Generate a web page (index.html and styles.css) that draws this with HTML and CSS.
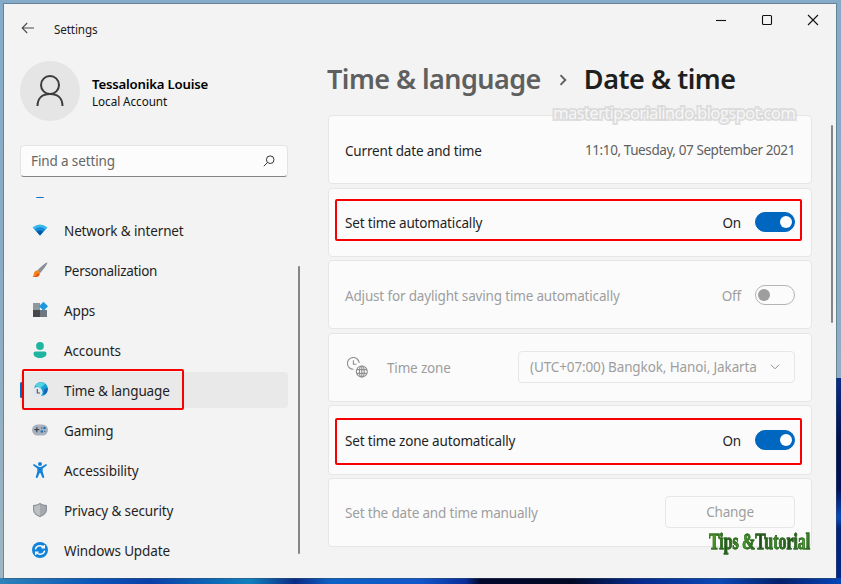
FILE: index.html
```
<!DOCTYPE html>
<html lang="en">
<head>
    <meta charset="utf-8">
    <title>Settings</title>
    <link rel="stylesheet" href="styles.css">
</head>
<body>
<div class="window">
    <header class="titlebar">
        <svg class="back" width="14" height="12" viewBox="0 0 14 12"><path d="M13 6H1.2M6.2 1 1.2 6l5 5"/></svg>
        <span class="app-name">Settings</span>
        <div class="controls">
            <svg width="12" height="12" viewBox="0 0 12 12"><path d="M1 6.5h10"/></svg>
            <svg width="12" height="12" viewBox="0 0 12 12"><rect x="1.5" y="1.5" width="9" height="9" rx="1"/></svg>
            <svg width="12" height="12" viewBox="0 0 12 12"><path d="m1 1 10 10M11 1 1 11"/></svg>
        </div>
    </header>

    <div class="content">
        <aside class="sidebar">
            <div class="profile">
                <div class="avatar">
                    <svg width="30" height="34" viewBox="0 0 30 34"><circle cx="15" cy="11" r="9"/><path d="M2.500 32c0-8 5-12 12.500-12s12.500 4 12.500 12"/></svg>
                </div>
                <div>
                    <div class="user">Tessalonika Louise</div>
                    <div class="account">Local Account</div>
                </div>
            </div>

            <div class="search">
                <span>Find a setting</span>
                <svg width="12" height="12" viewBox="0 0 12 12"><circle cx="7.200" cy="4.700" r="3.800"/><path d="M4.500 7.500.8 11.200"/></svg>
            </div>

            <nav class="nav">
                <a class="item first">
                    <svg width="16" height="16" viewBox="0 0 16 16"><rect x="4" y="13" width="8" height="3" rx="1" fill="#1a6dc0"/></svg>
                </a>
                <a class="item">
                    <svg width="16" height="16" viewBox="0 0 16 16">
                        <path d="M.5 5.500Q8-.5 15.500 5.500L8 13.500z" fill="#39b8ea"/>
                        <path d="M2.600 7.400Q8 3 13.400 7.400L8 13.500z" fill="#1489dc"/>
                        <path d="M4.800 9.700Q8 7.200 11.200 9.700L8 13.500z" fill="#0a57a0"/>
                    </svg>
                    <span>Network &amp; internet</span>
                </a>
                <a class="item">
                    <svg width="16" height="16" viewBox="0 0 16 16">
                        <path d="M15.300.5C16 1.200 11.500 7.500 8.200 11L5.400 8.400C9 4.500 14.500-.3 15.300.5z" fill="#8b9096"/>
                        <path d="M5.200 8.600c1.800 0 3 1.300 2.800 2.900C7.600 14.400 4 15.600.5 14.800 2 13.600 1.400 12 2.300 10.300 3 9.200 4 8.600 5.200 8.600z" fill="#f58220"/>
                        <path d="M4.800 11c.8 2-1 3.600-3.800 3.800 3 .6 6-.4 6.700-2.400z" fill="#e4501c"/>
                    </svg>
                    <span class="narrow">Personalization</span>
                </a>
                <a class="item">
                    <svg width="16" height="16" viewBox="0 0 16 16">
                        <path d="M1 1h7v7H1z" fill="#8e979e"/>
                        <path d="M1 8h7v7H1z" fill="#45494d"/>
                        <path d="M8 8h7v7H8z" fill="#70777f"/>
                        <path d="m11.500.2 4 4-4 4-4-4z" fill="#1d98de" stroke="#1d98de" stroke-linejoin="round"/>
                    </svg>
                    <span>Apps</span>
                </a>
                <a class="item">
                    <svg width="16" height="16" viewBox="0 0 16 16">
                        <circle cx="8" cy="4" r="3.900" fill="#20b5a0"/>
                        <path d="M3.500 9.500h9a2 2 0 0 1 2 2c0 2.800-2.700 4.500-6.500 4.500s-6.500-1.700-6.500-4.500a2 2 0 0 1 2-2z" fill="#20b5a0"/>
                    </svg>
                    <span>Accounts</span>
                </a>
                <a class="item active">
                    <svg width="16" height="16" viewBox="0 0 16 16">
                        <circle cx="9" cy="7" r="6.900" fill="#17a3d4"/>
                        <path d="M3 4C5 0 10-.8 13 1.500c-1 2.500-3 2-4 4.500z" fill="#55d3dc"/>
                        <path d="M12 7.500l3.500-2c.8 3-1 6.500-4 7.800z" fill="#1267b6"/>
                        <circle cx="5.300" cy="10.200" r="5.200" fill="#e4e8ed"/>
                        <path d="M5.300 7v4h2.800" fill="none" stroke="#555b64" stroke-width="1.200"/>
                    </svg>
                    <span>Time &amp; language</span>
                    <i class="mark mark-nav"></i>
                </a>
                <a class="item">
                    <svg width="16" height="16" viewBox="0 0 16 16">
                        <rect y="2.500" width="16" height="11" rx="5.500" fill="#a9b2bc"/>
                        <path d="M4.800 5.200v5M2.300 7.700h5" stroke="#3f4852" stroke-width="1.200"/>
                        <circle cx="12.500" cy="6" r="1.200" fill="#1771bd"/><circle cx="9.800" cy="9.500" r="1.200" fill="#1771bd"/><circle cx="12.700" cy="9.500" r=".8" fill="#44719b"/><circle cx="9.800" cy="6" r=".8" fill="#44719b"/>
                    </svg>
                    <span>Gaming</span>
                </a>
                <a class="item">
                    <svg width="16" height="16" viewBox="0 0 16 16">
                        <circle cx="8" cy="2" r="2" fill="#1582d8"/>
                        <path d="M2.400 2.200 7 5h2l4.600-2.800c1-.5 1.600.9.8 1.500L10.700 6.500v3.300l1.500 5c.3 1.300-1.500 1.700-2 .5L8.400 11h-.8l-1.800 4.300c-.5 1.200-2.300.8-2-.5l1.500-5V6.500L1.600 3.700c-.8-.6-.2-2 .8-1.500z" fill="#1582d8"/>
                    </svg>
                    <span>Accessibility</span>
                </a>
                <a class="item">
                    <svg width="16" height="16" viewBox="0 0 16 16">
                        <path d="M8 .8c2 1.500 4.300 2.200 7 2.200v4.500c0 3.500-2.700 6-7 7.700-4.300-1.700-7-4.200-7-7.700V3C3.700 3 6 2.300 8 .8z" fill="#8f9499"/>
                        <path d="M8 2.200c1.800 1.200 3.700 1.800 5.800 1.900V7.500c0 2.700-2 4.900-5.800 6.400z" fill="#a5a9ad"/>
                        <path d="M8 2.200C6.200 3.400 4.300 4 2.200 4.100V7.500c0 2.700 2 4.900 5.800 6.400z" fill="#bcc0c3"/>
                    </svg>
                    <span>Privacy &amp; security</span>
                </a>
                <a class="item">
                    <svg width="16" height="16" viewBox="0 0 16 16">
                        <circle cx="8" cy="8" r="8" fill="#1383d9"/>
                        <path d="M3.400 7.300C4 3.500 9.300 2.400 12 5.600M12.600 8.700C12 12.500 6.700 13.600 4 10.400M12.300 3v2.900H9.400M3.700 13v-2.900h2.900" fill="none" stroke="#fff" stroke-width="1.400"/>
                    </svg>
                    <span>Windows Update</span>
                </a>
            </nav>
        </aside>

        <div class="scroll scroll-nav"></div>

        <main class="main">
            <h1 class="crumbs">
                <span class="parent">Time &amp; language</span>
                <svg width="8" height="12" viewBox="0 0 8 12"><path d="m1.500 1.200 4.800 4.800-4.800 4.800"/></svg>
                <span class="current">Date &amp; time</span>
            </h1>

            <div class="cards">
                <section class="card">
                    <span class="label">Current date and time</span>
                    <span class="value">11:10, Tuesday, 07 September 2021</span>
                </section>
                <section class="card">
                    <span class="label">Set time automatically</span>
                    <span class="state">On</span>
                    <div class="toggle on"></div>
                    <i class="mark mark-time"></i>
                </section>
                <section class="card disabled">
                    <span class="label">Adjust for daylight saving time automatically</span>
                    <span class="state">Off</span>
                    <div class="toggle"></div>
                </section>
                <section class="card disabled">
                    <svg class="zone-icon" width="22" height="22" viewBox="0 0 22 22">
                        <path d="M6.500 12.300A5.900 5.900 0 1 1 12.200 6M6.400 3.200v4h3"/>
                        <circle cx="14.800" cy="14.500" r="5.500"/>
                        <ellipse cx="14.800" cy="14.500" rx="2.400" ry="5.500"/>
                        <path d="M9.800 12.600h10M9.800 16.400h10M14.800 9v11"/>
                    </svg>
                    <span class="label">Time zone</span>
                    <div class="combo">
                        <span>(UTC+07:00) Bangkok, Hanoi, Jakarta</span>
                        <svg width="10" height="6" viewBox="0 0 10 6"><path d="m1 .8 4 4 4-4"/></svg>
                    </div>
                </section>
                <section class="card">
                    <span class="label">Set time zone automatically</span>
                    <span class="state">On</span>
                    <div class="toggle on"></div>
                    <i class="mark mark-zone"></i>
                </section>
                <section class="card disabled">
                    <span class="label">Set the date and time manually</span>
                    <div class="button">Change</div>
                </section>
            </div>
        </main>
    </div>

    <div class="scroll scroll-main"></div>
    <div class="watermark">mastertipsorialindo.blogspot.com</div>
    <div class="logo">Tips &amp;Tutorial</div>
</div>
</body>
</html>
```
FILE: styles.css
```
* {
    box-sizing: border-box;
}

body {
    margin: 0;
    width: 841px;
    height: 584px;
    padding: 4px 5px 6px 4px;
    overflow: hidden;
    font-family: "Noto Sans", "Open Sans", sans-serif;
    font-size: 13.5px;
    letter-spacing: -.13px;
    color: #1f1f1f;
    background:
        linear-gradient(to right, #2e83b8 0, #0c57b9 90px, #0a3fa8 150px, #1180bd 250px, #0b2b85 295px, #0d61c4 330px, #1257c9 420px, #0a2e9a 465px, #02082c 480px, #020824 570px, #062a8c 640px, #0a48b4 720px, #041f6b 780px, #0546b8 841px) 0 578px / 841px 6px no-repeat,
        linear-gradient(#0a2e8c, #02104a 65px, #021058 110px, #0b4bc0 140px, #02237a 150px, #03268a) 836px 378px / 5px 206px no-repeat,
        linear-gradient(#85abc8, #8bacc4 50%, #9fb5c3);
}

svg {
    display: block;
    flex: none;
    fill: none;
}

.window {
    position: relative;
    width: 832px;
    height: 574px;
    background: #f3f3f3;
    box-shadow: 0 0 0 1px rgba(60, 80, 95, .45);
}

.titlebar {
    display: flex;
    align-items: center;
    height: 48px;
    padding-left: 17px;
}

.back {
    stroke: #4c4c4c;
    stroke-width: 1.1;
}

.app-name {
    margin-left: 19px;
    padding-top: 1px;
    font-size: 11.7px;
}

.controls {
    display: flex;
    gap: 34px;
    margin: -16px 17px 0 auto;
    stroke: #111;
    stroke-width: 1.1;
}

.content {
    display: flex;
    height: 526px;
}

.sidebar {
    width: 284px;
    padding: 9px 0 0 16px;
}

.profile {
    display: flex;
    align-items: center;
    gap: 12px;
    height: 60px;
}

.avatar {
    display: flex;
    align-items: center;
    justify-content: center;
    width: 60px;
    height: 60px;
    border-radius: 50%;
    background: #e5e5e5;
    stroke: #3c3c3c;
    stroke-width: 2;
}

.user {
    padding-top: 3px;
    font-size: 13.2px;
    font-weight: 600;
    line-height: 18px;
    letter-spacing: -.2px;
    color: #000;
}

.account {
    font-size: 11.7px;
    line-height: 17px;
    letter-spacing: -.05px;
    color: #111;
}

.search {
    display: flex;
    align-items: center;
    justify-content: space-between;
    height: 32px;
    margin-top: 24px;
    padding: 0 12px 0 10px;
    border: 1px solid #e3e3e3;
    border-bottom-color: #858585;
    border-radius: 4px;
    background: #fcfcfc;
    color: #666;
    stroke: #333;
}

.nav {
    height: 375px;
    margin-top: 20px;
    margin-left: -2px;
    padding-left: 2px;
    overflow: hidden;
}

.item {
    position: relative;
    display: flex;
    align-items: center;
    gap: 16px;
    height: 36px;
    margin-bottom: 4px;
    padding-left: 12px;
    border-radius: 4px;
}

.item span {
    padding-top: 2px;
}

.narrow {
    letter-spacing: -.3px;
}

.first {
    margin-top: -25px;
}

.active {
    background: #e9e9e9;
}

.active::before {
    content: "";
    position: absolute;
    left: 0;
    top: 10px;
    width: 3px;
    height: 16px;
    border-radius: 2px;
    background: #0067c0;
}

.scroll {
    width: 2px;
    border-radius: 1px;
    background: #858585;
}

.scroll-nav {
    height: 288px;
    margin: 214px 0 0 10px;
}

.scroll-main {
    position: absolute;
    left: 827px;
    top: 121px;
    height: 198px;
}

.main {
    width: 484px;
    margin-left: 28px;
}

.crumbs {
    display: flex;
    align-items: center;
    height: 63px;
    margin: 0;
    padding-bottom: 10px;
    font-size: 27px;
    font-weight: 600;
    letter-spacing: -.55px;
    white-space: nowrap;
}

.crumbs svg {
    margin: 2px 17px 0 18px;
    stroke: #5e5e5e;
    stroke-width: 1.9;
}

.parent {
    margin-left: -1px;
    color: #5f5f5f;
}

.current {
    letter-spacing: -.45px;
}

.cards {
    display: grid;
    grid-auto-rows: 69.2px;
    gap: 3.4px;
}

.card {
    position: relative;
    display: flex;
    align-items: center;
    padding: 0 16px;
    border: 1px solid #e6e6e6;
    border-radius: 4px;
    background: #fbfbfb;
    letter-spacing: -.17px;
    white-space: nowrap;
}

.label {
    margin-right: auto;
    padding-top: 2px;
}

.value {
    padding-top: 1px;
    letter-spacing: -.41px;
    color: #5f5f5f;
}

.disabled {
    color: #9e9e9e;
}

.state {
    margin-right: 14px;
    padding-top: 2px;
}

.toggle {
    display: flex;
    align-items: center;
    width: 40px;
    height: 20px;
    padding: 0 2px;
    border: 1px solid #b4b4b4;
    border-radius: 10px;
}

.toggle::before {
    content: "";
    width: 12px;
    height: 12px;
    border-radius: 50%;
    background: #9e9e9e;
}

.on {
    justify-content: flex-end;
    border-color: #0067c0;
    background: #0067c0;
}

.on::before {
    background: #fff;
}

.zone-icon {
    margin: 2px 18px 0 2px;
    stroke: #8f8f8f;
    stroke-width: 1.1;
}

.combo,
.button {
    display: flex;
    align-items: center;
    justify-content: space-between;
    height: 32px;
    border: 1px solid #e7e7e7;
    border-radius: 4px;
}

.combo {
    width: 277px;
    padding: 0 14px 0 11px;
    letter-spacing: -.12px;
    stroke: #8e8e8e;
}

.button {
    justify-content: center;
    width: 130px;
}

/* red callouts */
.mark {
    position: absolute;
    border: 2px solid #f80000;
    border-radius: 2px;
}

.mark-nav {
    left: 2px;
    top: -3px;
    width: 162px;
    height: 41px;
}

.mark-time,
.mark-zone {
    left: 6px;
    right: 9px;
}

.mark-time {
    top: 10.4px;
    height: 42px;
}

.mark-zone {
    top: 11.6px;
    height: 47px;
}

.watermark {
    position: absolute;
    left: 549px;
    top: 96px;
    font: 17px/26px "Open Sans", sans-serif;
    letter-spacing: -.78px;
    color: #f7f7f7;
    -webkit-text-stroke: 4px rgba(215, 215, 215, .8);
    paint-order: stroke fill;
}

.logo {
    position: absolute;
    left: 705px;
    top: 525px;
    font: bold 23px/26px "Liberation Serif", serif;
    letter-spacing: 0;
    word-spacing: -1px;
    white-space: nowrap;
    color: transparent;
    background: linear-gradient(100deg, #67b52e, #24571a 18%, #4da32b 34%, #1d4516 50%, #3d8a28 65%, #1c4418 80%, #54a334 92%, #24501b);
    -webkit-background-clip: text;
    -webkit-text-stroke: .8px #2f6a25;
    transform: scaleX(.69);
    transform-origin: left;
}
```
